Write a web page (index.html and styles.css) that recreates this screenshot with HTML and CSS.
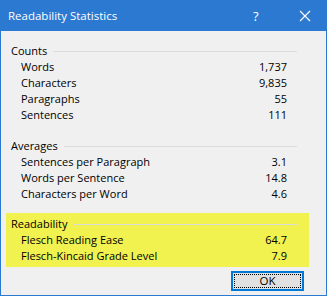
FILE: index.html
```html
<!DOCTYPE html>
<html>
<head>
<meta charset="utf-8">
<link rel="stylesheet" href="styles.css">
</head>
<body>
<div class="window">
  <div class="titlebar">
    <span class="title">Readability Statistics</span>
    <span class="help">?</span>
    <svg class="close" width="12" height="12" viewBox="0 0 12 12"><path d="M1 1 L11 11 M11 1 L1 11" stroke="#fff" stroke-width="1.2" fill="none"/></svg>
  </div>
  <div class="content">
    <div class="group">
      <div class="head"><span>Counts</span><span class="rule"></span></div>
      <div class="row"><span>Words</span><span class="val">1,737</span></div>
      <div class="row"><span>Characters</span><span class="val">9,835</span></div>
      <div class="row"><span>Paragraphs</span><span class="val">55</span></div>
      <div class="row"><span>Sentences</span><span class="val">111</span></div>
    </div>
    <div class="group averages">
      <div class="head"><span>Averages</span><span class="rule"></span></div>
      <div class="row"><span>Sentences per Paragraph</span><span class="val">3.1</span></div>
      <div class="row"><span>Words per Sentence</span><span class="val">14.8</span></div>
      <div class="row"><span>Characters per Word</span><span class="val">4.6</span></div>
    </div>
    <div class="group readability">
      <div class="head"><span>Readability</span><span class="rule"></span></div>
      <div class="row"><span>Flesch Reading Ease</span><span class="val">64.7</span></div>
      <div class="row"><span>Flesch-Kincaid Grade Level</span><span class="val">7.9</span></div>
    </div>
    <div class="footer">
      <button class="ok"><span class="focus">OK</span></button>
    </div>
  </div>
</div>
</body>
</html>
```
FILE: styles.css
```css
html, body {
  margin: 0;
  padding: 0;
  background: #f0f0f0;
}
.window {
  width: 327px;
  height: 296px;
  box-sizing: border-box;
  border: 1px solid #2b79d1;
  border-top: none;
  background: #f0f0f0;
  font-family: "Open Sans", "Noto Sans", sans-serif;
  font-size: 11px;
  color: #000;
  display: flex;
  flex-direction: column;
}
.titlebar {
  height: 31px;
  background: #2b79d1;
  color: #fff;
  display: flex;
  align-items: center;
  padding-left: 8px;
  margin: 0 -1px;
}
.title {
  flex: 1;
  font-size: 11.5px;
}
.help {
  font-size: 13px;
  width: 12px;
  margin-right: 34px;
}
.close {
  margin-right: 16px;
}
.content {
  padding: 12px 0 0 5px;
  display: flex;
  flex-direction: column;
}
.group {
  padding-right: 17px;
}
.head {
  display: flex;
  align-items: center;
  height: 16px;
  line-height: 16px;
  padding-left: 5px;
}
.rule {
  flex: 1;
  height: 0;
  border-top: 1px solid #dcdcdc;
  margin-left: 6px;
  margin-right: 12px;
}
.row {
  display: flex;
  justify-content: space-between;
  height: 16px;
  line-height: 16px;
  padding-left: 15px;
  padding-right: 22px;
}
.averages {
  margin-top: 15px;
}
.readability {
  margin-top: 11px;
  background: #f1f150;
  width: 303px;
  box-sizing: border-box;
  padding: 3px 0 3px 0;
}
.readability .head { padding-left: 5px; }
.footer {
  display: flex;
  justify-content: flex-end;
  padding-right: 22px;
  margin-top: 4px;
}
.ok {
  width: 73px;
  height: 20px;
  box-sizing: border-box;
  border: 2px solid #0078d7;
  background: #e1e1e1;
  padding: 1px;
  margin: 0;
  font-family: "Open Sans", "Noto Sans", sans-serif;
  font-size: 11.5px;
  color: #000;
  display: flex;
}
.focus {
  flex: 1;
  border: 1px dotted #000;
  display: flex;
  align-items: center;
  justify-content: center;
  line-height: 12px;
}
```
